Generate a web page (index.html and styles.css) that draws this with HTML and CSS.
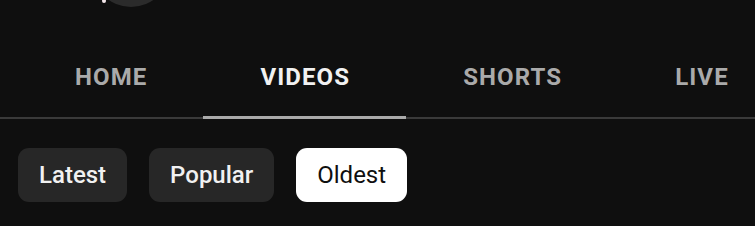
FILE: index.html
```html
<!DOCTYPE html>
<html lang="en">
<head>
  <meta charset="UTF-8">
  <meta name="viewport" content="width=device-width, initial-scale=1.0">
  <title>Videos</title>
  <link rel="stylesheet" href="styles.css">
</head>
<body>
  <div class="header">
    <div class="avatar"><span class="dot"></span></div>
  </div>

  <div class="tabs">
    <div class="tab">Home</div>
    <div class="tab active">Videos</div>
    <div class="tab">Shorts</div>
    <div class="tab">Live</div>
  </div>

  <div class="chips">
    <button class="chip">Latest</button>
    <button class="chip">Popular</button>
    <button class="chip selected">Oldest</button>
  </div>
</body>
</html>
```

FILE: styles.css
```css
/* Page */
body {
margin: 0;
background-color: #0f0f0f;
font-family: Roboto, "Liberation Sans", sans-serif;
overflow: hidden;
}

/* Bottom of the channel avatar, cut off at the top */
.header {
height: 8px;
overflow: hidden;
}

.avatar {
width: 78px;
height: 78px;
margin: -71px 0 0 92px;
border-radius: 50%;
background-color: #2b2b2b;
position: relative;
}

.dot {
position: absolute;
left: 10px;
bottom: 4px;
width: 4px;
height: 4px;
border-radius: 50%;
background-color: #f3e6ea;
}

/* Tab bar */
.tabs {
display: flex;
padding-left: 18px;
border-bottom: 2px solid #3a3a3a;
}

.tab {
padding: 57px 56px 27px 57px;
margin-bottom: -2px;
line-height: 24px;
font-size: 24px;
font-weight: 700;
text-transform: uppercase;
letter-spacing: 1.1px;
color: #aaaaaa;
border-bottom: 3px solid transparent;
}

.tab.active {
color: #f1f1f1;
border-bottom-color: #aaaaaa;
}

/* Sort chips */
.chips {
display: flex;
gap: 22px;
padding: 29px 0 0 18px;
}

.chip {
padding: 15px 21px;
line-height: 24px;
font-family: Roboto, "Liberation Sans", sans-serif;
font-size: 24px;
font-weight: 500;
color: #f1f1f1;
background-color: #272727;
border: none;
border-radius: 11px;
cursor: pointer;
}

.chip.selected {
color: #0f0f0f;
background-color: #ffffff;
font-weight: 400;
}
```
